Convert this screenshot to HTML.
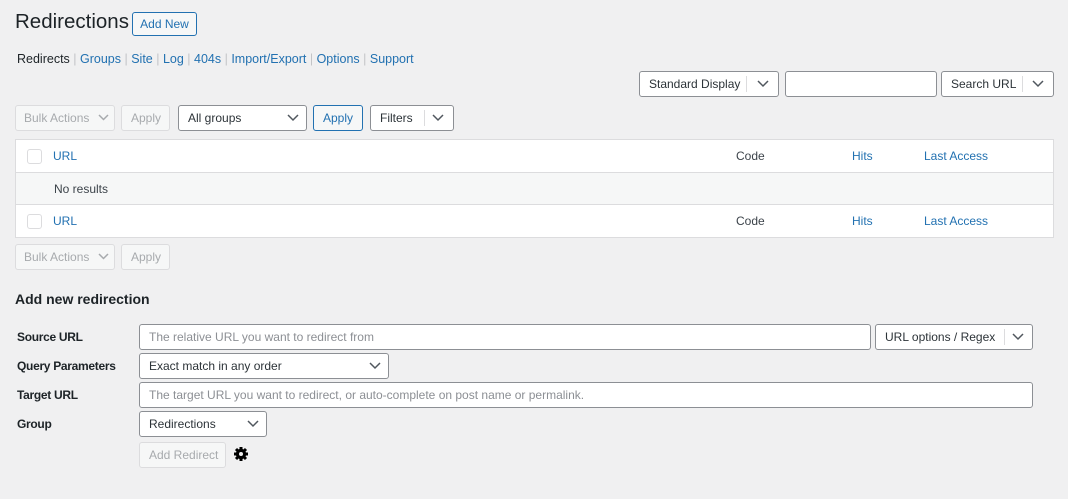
<!DOCTYPE html>
<html><head><meta charset="utf-8"><style>
*{box-sizing:border-box}
body{margin:0;width:1068px;height:499px;background:#f0f0f1;font-family:"Liberation Sans",sans-serif;font-size:12px;color:#3c434a;position:relative;overflow:hidden}
.a{position:absolute}
.b{position:absolute;border:1px solid #8c8f94;border-radius:3px;background:#fff;height:26px;line-height:24px;padding-left:9px;color:#2c3338;white-space:nowrap;font-size:12px}
.dis{border-color:#dcdcde;background:#f6f7f7;color:#a7aaad}
.lnk{color:#2271b1}
.chev{position:absolute;top:8px}
.sep{position:absolute;top:4px;bottom:4px;width:1px;background:#dcdcde}
.cb{position:absolute;left:11px;width:15px;height:15px;border:1px solid #dcdcde;border-radius:3px;background:#fff}
.lab{position:absolute;left:17px;font-weight:bold;color:#1d2327;font-size:12px;letter-spacing:-0.3px}
</style></head><body>
<div class="a" style="left:15px;top:10px;font-size:20.5px;color:#1d2327">Redirections</div>
<div class="a" style="left:132px;top:12px;width:65px;height:24px;border:1px solid #2271b1;border-radius:3px;background:#f6f7f7;color:#2271b1;font-size:12px;line-height:22px;text-align:center">Add New</div>
<div class="a" style="left:17px;top:52px;font-size:12.5px;color:#c3c4c7;white-space:nowrap"><span style="color:#1d2327">Redirects</span> | <span class="lnk">Groups</span> | <span class="lnk">Site</span> | <span class="lnk">Log</span> | <span class="lnk">404s</span> | <span class="lnk">Import/Export</span> | <span class="lnk">Options</span> | <span class="lnk">Support</span></div>

<div class="b" style="left:639px;top:71px;width:140px">Standard Display<div class="sep" style="left:106px"></div><svg class="chev" style="left:117px" width="12" height="8"><polyline points="1,1 6,6 11,1" fill="none" stroke="#50575e" stroke-width="1.5"/></svg></div>
<div class="b" style="left:785px;top:71px;width:152px"></div>
<div class="b" style="left:941px;top:71px;width:113px">Search URL<div class="sep" style="left:80px"></div><svg class="chev" style="left:90px" width="12" height="8"><polyline points="1,1 6,6 11,1" fill="none" stroke="#50575e" stroke-width="1.5"/></svg></div>

<div class="b dis" style="left:15px;top:105px;width:100px;padding-left:8px">Bulk Actions<svg class="chev" style="left:82px" width="11" height="8"><polyline points="1,1 5.5,5.5 10,1" fill="none" stroke="#a7aaad" stroke-width="1.5"/></svg></div>
<div class="b dis" style="left:121px;top:105px;width:49px">Apply</div>
<div class="b" style="left:178px;top:105px;width:129px">All groups<svg class="chev" style="left:108px" width="12" height="8"><polyline points="1,1 6,6 11,1" fill="none" stroke="#50575e" stroke-width="1.5"/></svg></div>
<div class="b" style="left:313px;top:105px;width:50px;border-color:#2271b1;background:#f6f7f7;color:#2271b1">Apply</div>
<div class="b" style="left:370px;top:105px;width:84px">Filters<div class="sep" style="left:53px"></div><svg class="chev" style="left:61px" width="12" height="8"><polyline points="1,1 6,6 11,1" fill="none" stroke="#50575e" stroke-width="1.5"/></svg></div>

<div class="a" style="left:15px;top:139px;width:1039px;height:99px;border:1px solid #dcdcde;background:#fff">
 <div class="a" style="left:0;top:32px;width:1037px;height:33px;background:#f6f7f7;border-top:1px solid #dcdcde;border-bottom:1px solid #dcdcde"></div>
 <div class="cb" style="top:9px"></div>
 <div class="a lnk" style="left:37px;top:9px">URL</div>
 <div class="a" style="left:720px;top:9px">Code</div>
 <div class="a lnk" style="left:836px;top:9px">Hits</div>
 <div class="a lnk" style="left:908px;top:9px">Last Access</div>
 <div class="a" style="left:38px;top:42px">No results</div>
 <div class="cb" style="top:74px"></div>
 <div class="a lnk" style="left:37px;top:74px">URL</div>
 <div class="a" style="left:720px;top:74px">Code</div>
 <div class="a lnk" style="left:836px;top:74px">Hits</div>
 <div class="a lnk" style="left:908px;top:74px">Last Access</div>
</div>

<div class="b dis" style="left:15px;top:244px;width:100px;padding-left:8px">Bulk Actions<svg class="chev" style="left:82px" width="11" height="8"><polyline points="1,1 5.5,5.5 10,1" fill="none" stroke="#a7aaad" stroke-width="1.5"/></svg></div>
<div class="b dis" style="left:121px;top:244px;width:49px">Apply</div>

<div class="a" style="left:15px;top:291px;font-size:14px;font-weight:bold;color:#1d2327">Add new redirection</div>

<div class="lab" style="top:330px">Source URL</div>
<div class="lab" style="top:359px">Query Parameters</div>
<div class="lab" style="top:388px">Target URL</div>
<div class="lab" style="top:417px">Group</div>

<div class="b" style="left:139px;top:324px;width:732px;color:#8c8f94">The relative URL you want to redirect from</div>
<div class="b" style="left:875px;top:324px;width:158px">URL options / Regex<div class="sep" style="left:128px"></div><svg class="chev" style="left:136px" width="12" height="8"><polyline points="1,1 6,6 11,1" fill="none" stroke="#50575e" stroke-width="1.5"/></svg></div>
<div class="b" style="left:139px;top:353px;width:250px">Exact match in any order<svg class="chev" style="left:229px" width="12" height="8"><polyline points="1,1 6,6 11,1" fill="none" stroke="#50575e" stroke-width="1.5"/></svg></div>
<div class="b" style="left:139px;top:382px;width:894px;color:#8c8f94">The target URL you want to redirect, or auto-complete on post name or permalink.</div>
<div class="b" style="left:139px;top:411px;width:128px">Redirections<svg class="chev" style="left:107px" width="12" height="8"><polyline points="1,1 6,6 11,1" fill="none" stroke="#50575e" stroke-width="1.5"/></svg></div>
<div class="b dis" style="left:139px;top:442px;width:87px">Add Redirect</div>
<svg class="a" style="left:233px;top:446px" width="16" height="16" viewBox="0 0 16 16"><g fill="#000"><circle cx="8" cy="8" r="5.2"/><g stroke="#000" stroke-width="3"><line x1="8" y1="1" x2="8" y2="15"/><line x1="1" y1="8" x2="15" y2="8"/><line x1="3" y1="3" x2="13" y2="13"/><line x1="13" y1="3" x2="3" y2="13"/></g></g><circle cx="8" cy="8" r="2" fill="#f0f0f1"/></svg>
</body></html>
